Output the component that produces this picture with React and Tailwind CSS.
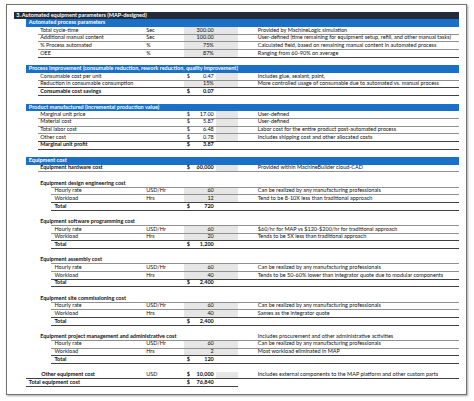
const LEVELS = {
  L0: { spacer: "w-[12.7px]", label: "w-[120px] pl-[2.6px]" },
  L1: { spacer: "w-[24.3px]", label: "w-[108.4px] pl-[2.4px]" },
  L2: { spacer: "w-[37.7px]", label: "w-[95px] pl-[3.3px]" },
  H: { spacer: "w-[37.7px]", label: "-ml-[11px] w-[106px]" },
  O: { spacer: "w-[12.7px]", label: "w-[120px] pl-[15px]" },
}

const LINES = {
  thin: "border-b border-[#8f8f8f]",
  thick: "border-b-[1.5px] border-[#404040]",
  none: "",
}

const labor = (rate, hrs, total, n1, n2) => [
  { lv: "L2", label: "Hourly rate", unit: "USD/Hr", val: "60", shade: "full", note: n1, line: "thin" },
  { lv: "L2", label: "Workload", unit: "Hrs", val: hrs, shade: "full", note: n2, line: "thick" },
  { lv: "L2", label: "Total", dollar: true, val: total, bold: true, line: "thick" },
]

const rows = [
  { t: "bar", label: "Automated process parameters" },
  { lv: "L1", label: "Total cycle-time", unit: "Sec", val: "300.00", shade: "full", note: "Provided by MachineLogic simulation", line: "thin" },
  { lv: "L1", label: "Additional manual content", unit: "Sec", val: "100.00", shade: "full", note: "User-defined (time remaining for equipment setup, refill, and other manual tasks)", line: "thin" },
  { lv: "L1", label: "% Process automated", unit: "%", val: "75%", shade: "full", note: "Calculated field, based on remaining manual content in automated process", line: "thin" },
  { lv: "L1", label: "OEE", unit: "%", val: "87%", shade: "full", note: "Ranging from 60-90% on average", line: "thick" },
  { t: "blank" },
  { t: "bar", label: "Process improvement (consumable reduction, rework reduction, quality improvement)" },
  { lv: "L1", label: "Consumable cost per unit", dollar: true, val: "0.47", shade: "right", note: "Includes glue, sealant, paint,", line: "thin" },
  { lv: "L1", label: "Reduction in consumable consumption", val: "15%", shade: "full", note: "More controlled usage of consumable due to automated vs. manual process", line: "thick" },
  { lv: "L1", label: "Consumable cost savings", dollar: true, val: "0.07", bold: true, line: "thick" },
  { t: "blank" },
  { t: "bar", label: "Product manufactured (incremental production value)" },
  { lv: "L1", label: "Marginal unit price", dollar: true, val: "17.00", shade: "right", note: "User-defined", line: "thin" },
  { lv: "L1", label: "Material cost", dollar: true, val: "5.87", shade: "right", note: "User-defined", line: "thin" },
  { lv: "L1", label: "Total labor cost", dollar: true, val: "6.48", shade: "right", note: "Labor cost for the entire product post-automated process", line: "thin" },
  { lv: "L1", label: "Other cost", dollar: true, val: "0.78", shade: "right", note: "Includes shipping cost and other allocated costs", line: "thick" },
  { lv: "L1", label: "Marginal unit profit", dollar: true, val: "3.87", bold: true, line: "thick" },
  { t: "blank" },
  { t: "bar", label: "Equipment cost" },
  { lv: "L1", label: "Equipment hardware cost", dollar: true, val: "60,000", shade: "right", bold: true, note: "Provided within MachineBuilder cloud-CAD", line: "thin" },
  { t: "blank" },
  { lv: "H", label: "Equipment design engineering cost", bold: true, line: "thin" },
  ...labor("60", "12", "720", "Can be realized by any manufacturing professionals", "Tend to be 8-10X less than traditional approach"),
  { t: "blank" },
  { lv: "H", label: "Equipment software programming cost", bold: true, line: "thin" },
  ...labor("60", "20", "1,200", "$60/hr for MAP vs $120-$200/hr for traditional approach", "Tends to be 5X less than traditional approach"),
  { t: "blank" },
  { lv: "H", label: "Equipment assembly cost", bold: true, line: "thin" },
  ...labor("60", "40", "2,400", "Can be realized by any manufacturing professionals", "Tends to be 50-60% lower than integrator quote due to modular components"),
  { t: "blank" },
  { lv: "H", label: "Equipment site commissioning cost", bold: true, line: "thin" },
  ...labor("60", "40", "2,400", "Can be realized by any manufacturing professionals", "Sames as the integrator quote"),
  { t: "blank" },
  { lv: "H", label: "Equipment project management and administrative cost", bold: true, note: "Includes procurement and other administrative activities", line: "thin" },
  ...labor("60", "2", "120", "Can be realized by any manufacturing professionals", "Most workload eliminated in MAP"),
  { t: "blank" },
  { lv: "O", label: "Other equipment cost", unit: "USD", dollar: true, val: "10,000", shade: "right", bold: true, note: "Includes external components to the MAP platform and other custom parts", line: "thick" },
  { lv: "L0", label: "Total equipment cost", dollar: true, val: "76,840", bold: true, line: "thick", short: true },
]

function Row({ r }) {
  if (r.t === "blank") return <div className="h-[7.66px]" />
  if (r.t === "bar")
    return (
      <div className="ml-[12.7px] flex h-[7.66px] items-center bg-[#1a6fc6] pl-[2.6px] font-bold text-white">
        {r.label}
      </div>
    )

  const lv = LEVELS[r.lv]
  const line = LINES[r.line || "none"]
  const weight = r.bold ? "font-bold" : ""
  const shadeLeft = r.shade === "full" ? "bg-[#e6e6e6]" : ""
  const shadeRight = r.shade ? "bg-[#e6e6e6]" : ""

  return (
    <div className="flex h-[7.66px]">
      <div className={`${lv.spacer} shrink-0`} />
      <div className={`flex flex-1 ${r.short ? "" : line}`}>
        <div className={`flex ${r.short ? line : ""}`}>
          <div className={`${lv.label} flex shrink-0 items-center whitespace-nowrap ${weight}`}>{r.label}</div>
          <div className="flex w-[37.6px] shrink-0 items-center">{r.unit}</div>
          <div className={`flex w-[32px] shrink-0 items-center justify-between pl-[3px] pr-[2px] ${shadeLeft} ${weight}`}>
            <span>{r.dollar ? "$" : ""}</span>
            <span>{r.val}</span>
          </div>
          <div className={`w-[22px] shrink-0 ${shadeRight}`} />
        </div>
        <div className="flex flex-1 items-center whitespace-nowrap pl-[20px]">{r.note}</div>
      </div>
    </div>
  )
}

export default function App() {
  return (
    <div className="h-[401px] w-[474px] overflow-hidden bg-white pl-[6px] pt-[4px]">
      <div
        className="h-[390.5px] w-[461px] border-[1.5px] border-[#727272] pl-[6.5px] pt-[6.7px] text-[5.5px] leading-none text-[#111] shadow-[1px_1px_2px_rgba(0,0,0,0.35)]"
        style={{ fontFamily: "Lato, 'Liberation Sans', sans-serif" }}
      >
        <div className="w-[445px]">
          <div className="flex h-[7.66px] items-center bg-[#232b38] pl-[2.7px] font-bold text-white">
            3. Automated equipment parameters (MAP-designed)
          </div>
          {rows.map((r, i) => (
            <Row key={i} r={r} />
          ))}
        </div>
      </div>
    </div>
  )
}
